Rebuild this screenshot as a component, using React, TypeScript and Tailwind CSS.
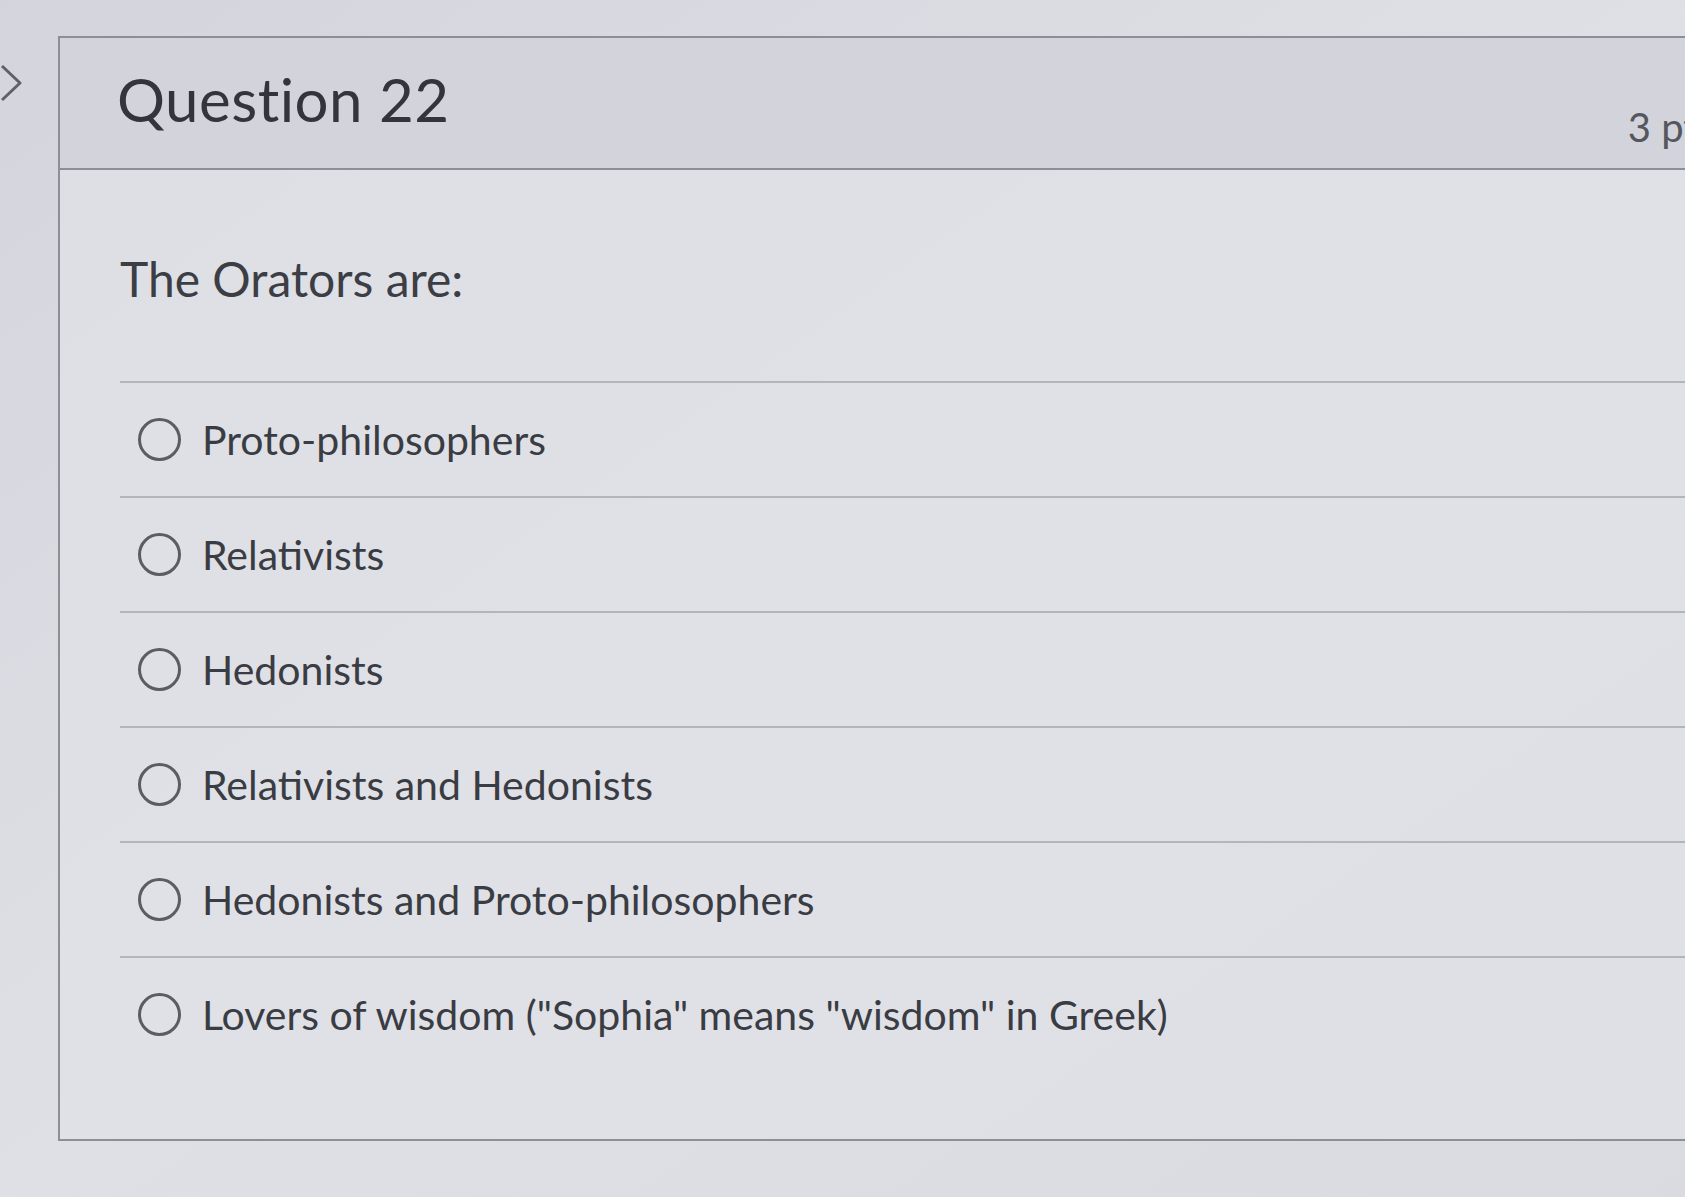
import React from "react";

const answers = [
  "Proto-philosophers",
  "Relativists",
  "Hedonists",
  "Relativists and Hedonists",
  "Hedonists and Proto-philosophers",
  'Lovers of wisdom ("Sophia" means "wisdom" in Greek)',
];

function Radio() {
  return <span className="h-[43px] w-[43px] shrink-0 rounded-full border-[3px] border-[#5b5d63]" />;
}

export default function App() {
  return (
    <div
      className="relative h-[1197px] w-[1685px] overflow-hidden bg-gradient-to-br from-[#d4d5dc] via-[#dfe0e6] to-[#dadbe1] text-[#34363d]"
      style={{ fontFamily: "Lato, 'Open Sans', sans-serif" }}
    >
      {/* collapse chevron, cut off at the left edge */}
      <svg className="absolute left-0 top-[62px]" width="24" height="42" viewBox="0 0 24 42" fill="none">
        <path d="M2 4 L20 21 L2 38" stroke="#5f6168" strokeWidth="3" strokeLinejoin="round" />
      </svg>

      <div className="ml-[58px] mt-[36px] w-[1700px] border-y-2 border-l-2 border-[#8d8f97]">
        <div className="flex h-[132px] items-center justify-between border-b-2 border-[#8d8f97] bg-[#d2d3db] pb-[8px] pl-[57px] pr-[43px]">
          <h2 className="text-[60px] font-normal leading-none tracking-[0.5px] text-[#33353c]">Question 22</h2>
          <span className="pt-[56px] text-[40px] leading-none text-[#55575e]">3 pts</span>
        </div>

        <div className="bg-[#e0e1e6]/80 pl-[60px] pt-[80px] pb-[68px]">
          <p className="text-[48px] leading-[1.2] text-[#3c3e45]">The Orators are:</p>

          <div className="mt-[73px]">
            {answers.map((a, i) => (
              <div
                key={i}
                className="flex h-[115px] items-center gap-[21px] border-t-2 border-[#b3b5bc] pl-[18px]"
              >
                <Radio />
                <span className="text-[41px] leading-[1.2] text-[#3a3c43]">{a}</span>
              </div>
            ))}
          </div>
        </div>
      </div>
    </div>
  );
}
